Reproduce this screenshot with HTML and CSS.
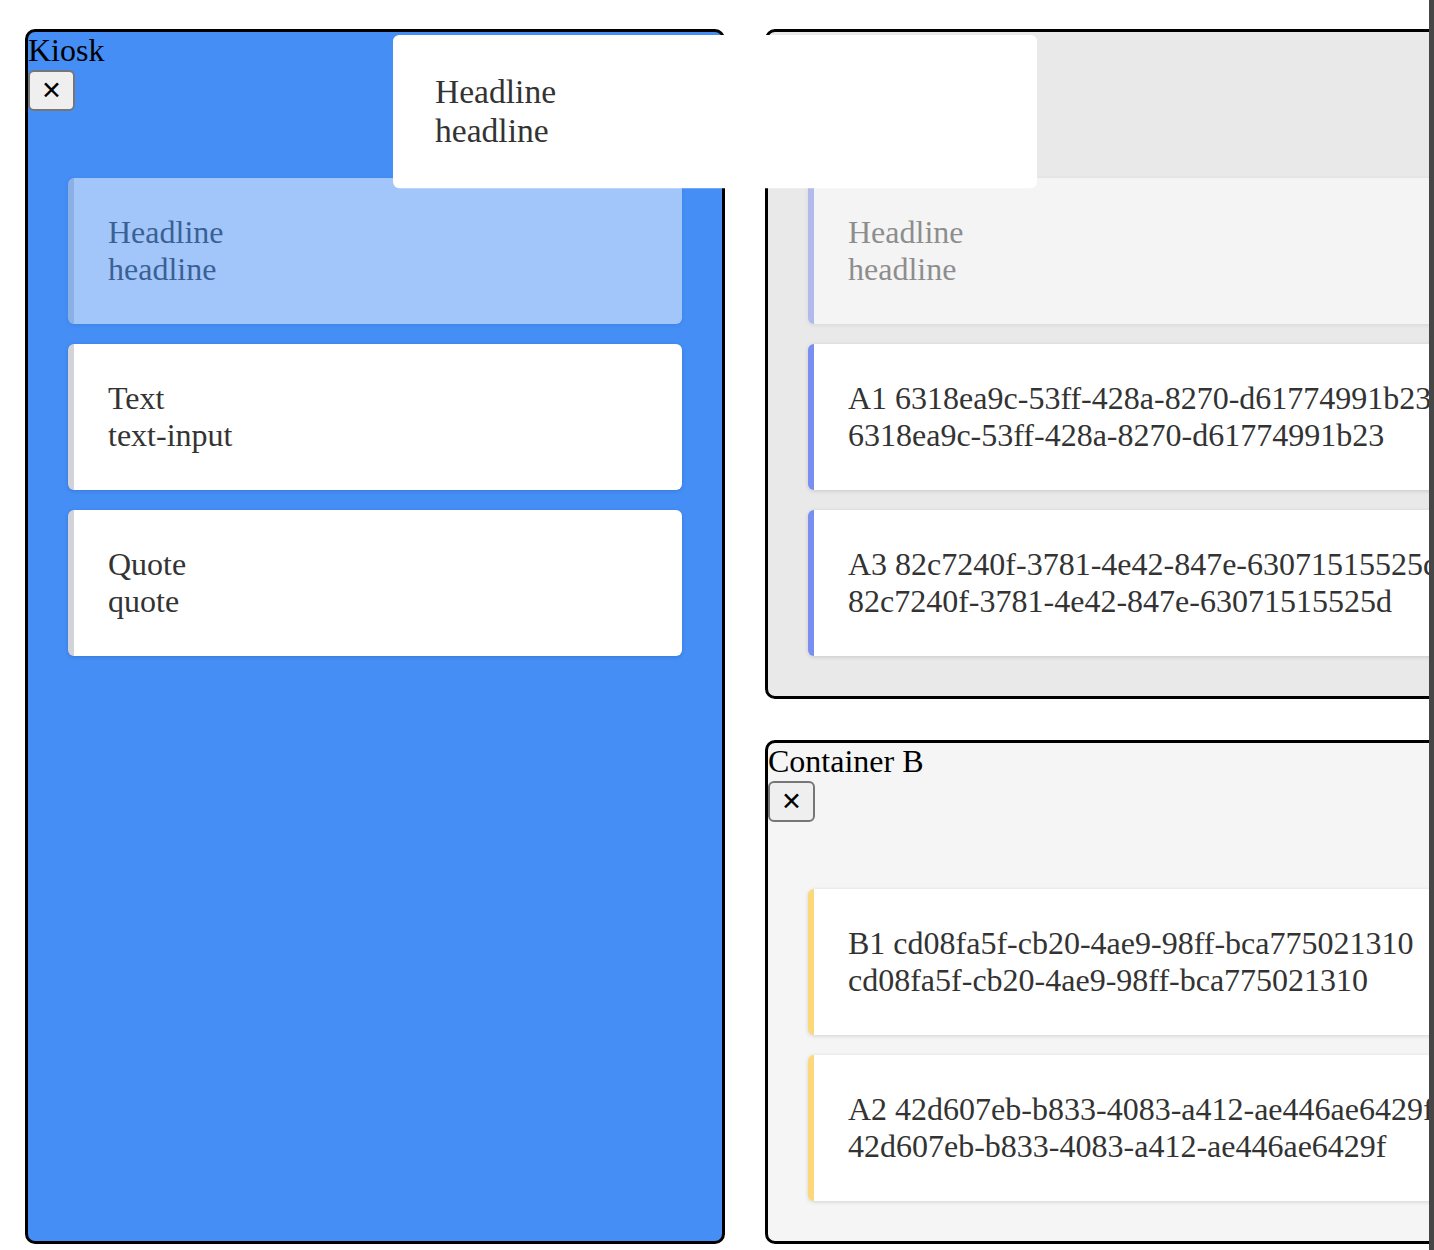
FILE: index.html
```html
<!DOCTYPE html>
<html>
<head>
<meta charset="utf-8">
<title>Board</title>
<link rel="stylesheet" href="styles.css">
</head>
<body>
<div class="board">
  <section class="container kiosk">
    <div class="container-title">Kiosk</div>
    <button class="close-btn">✕</button>
    <div class="list">
      <div class="card card-grey placeholder">
        <div class="card-line">Headline</div>
        <div class="card-line">headline</div>
      </div>
      <div class="card card-grey">
        <div class="card-line">Text</div>
        <div class="card-line">text-input</div>
      </div>
      <div class="card card-grey">
        <div class="card-line">Quote</div>
        <div class="card-line">quote</div>
      </div>
    </div>
  </section>
  <div class="column">
    <section class="container container-a">
      <div class="container-title">Container A</div>
      <button class="close-btn">✕</button>
      <div class="list">
        <div class="card card-blue placeholder">
          <div class="card-line">Headline</div>
          <div class="card-line">headline</div>
        </div>
        <div class="card card-blue">
          <div class="card-line">A1 6318ea9c-53ff-428a-8270-d61774991b23</div>
          <div class="card-line">6318ea9c-53ff-428a-8270-d61774991b23</div>
        </div>
        <div class="card card-blue">
          <div class="card-line">A3 82c7240f-3781-4e42-847e-63071515525d</div>
          <div class="card-line">82c7240f-3781-4e42-847e-63071515525d</div>
        </div>
      </div>
    </section>
    <section class="container container-b">
      <div class="container-title">Container B</div>
      <button class="close-btn">✕</button>
      <div class="list">
        <div class="card card-yellow">
          <div class="card-line">B1 cd08fa5f-cb20-4ae9-98ff-bca775021310</div>
          <div class="card-line">cd08fa5f-cb20-4ae9-98ff-bca775021310</div>
        </div>
        <div class="card card-yellow">
          <div class="card-line">A2 42d607eb-b833-4083-a412-ae446ae6429f</div>
          <div class="card-line">42d607eb-b833-4083-a412-ae446ae6429f</div>
        </div>
      </div>
    </section>
  </div>
</div>
<div class="card card-drag">
  <div class="card-line">Headline</div>
  <div class="card-line">headline</div>
</div>
<div class="scroll-edge"></div>
</body>
</html>
```

FILE: styles.css
```css
html {
  overflow: hidden;
}

body {
  margin: 0;
  font-family: "Liberation Serif", "Times New Roman", serif;
  font-size: 32px;
  line-height: 37px;
  color: #000;
  background: #fff;
}

.board {
  display: flex;
  align-items: stretch;
  gap: 40px;
  padding: 29px 0 0 25px;
  width: 1600px;
}

.column {
  display: flex;
  flex-direction: column;
  gap: 41px;
  width: 800px;
  flex: none;
}

.container {
  box-sizing: border-box;
  border: 3px solid #000;
  border-radius: 10px;
  display: flex;
  flex-direction: column;
  align-items: flex-start;
}

.kiosk {
  width: 700px;
  flex: none;
  background: #448ef6;
}

.container-a {
  background: #e9e9e9;
}

.container-b {
  background: #f5f5f5;
}

.container-title {
  height: 37px;
  white-space: nowrap;
}

.close-btn {
  box-sizing: border-box;
  width: 47px;
  height: 41px;
  margin-top: 1px;
  padding: 0;
  border: 2px solid #767676;
  border-radius: 6px;
  background: #efefef;
  color: #000;
  font-family: "DejaVu Sans", sans-serif;
  font-size: 25px;
  font-weight: bold;
  line-height: 1;
  display: flex;
  align-items: center;
  justify-content: center;
}

.list {
  align-self: stretch;
  margin-top: 27px;
  padding: 40px;
  display: flex;
  flex-direction: column;
  gap: 20px;
}

.card {
  box-sizing: border-box;
  height: 146px;
  padding: 36px 34px;
  background: #fff;
  border-left: 6px solid #d1d3d8;
  border-radius: 6px;
  color: #333;
  box-shadow: 0 1px 4px rgba(0, 0, 0, 0.14);
  white-space: nowrap;
}

.card-line {
  height: 37px;
}

.card-grey {
  border-left-color: #d1d3d8;
}

.card-blue {
  border-left-color: #788ef0;
}

.card-yellow {
  border-left-color: #fdd87a;
}

.placeholder {
  opacity: 0.5;
}

.card-drag {
  position: absolute;
  left: 393px;
  top: 35px;
  width: 614px;
  border-left-color: #fff;
  box-shadow: none;
  transform: scale(1.049);
  transform-origin: 0 0;
}

.scroll-edge {
  position: fixed;
  top: 0;
  right: 0;
  bottom: 0;
  width: 5px;
  background: #464646;
}
```
